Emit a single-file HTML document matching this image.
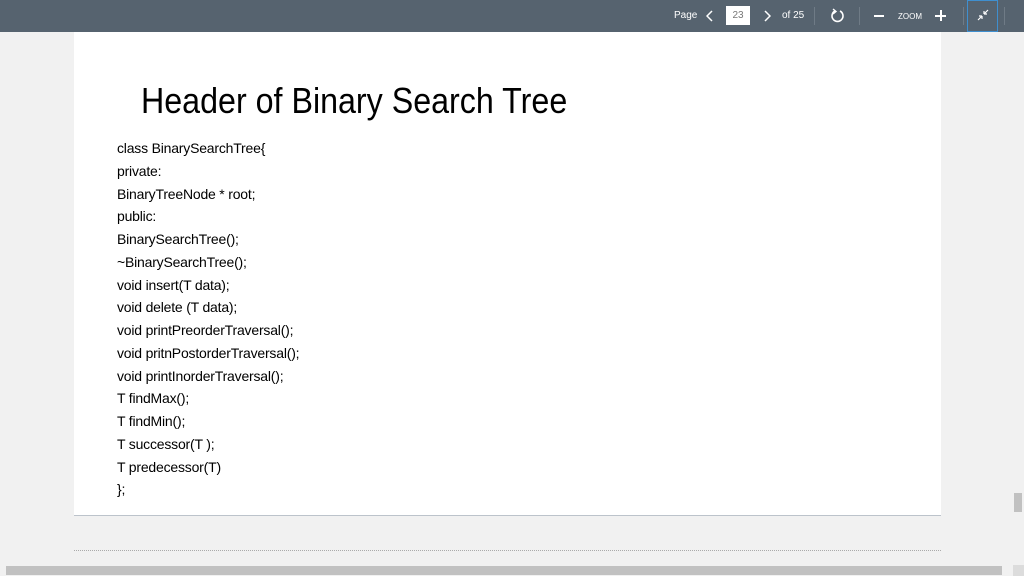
<!DOCTYPE html>
<html><head><meta charset="utf-8"><style>
*{margin:0;padding:0;box-sizing:border-box}
body{width:1024px;height:576px;overflow:hidden;background:#f1f1f1;font-family:"Liberation Sans",sans-serif;position:relative}
.bar{position:absolute;left:0;top:0;width:1024px;height:32px;background:#56636f;color:#fff}
.bar span{position:absolute;font-size:10px;top:10px}
.page{position:absolute;left:74px;top:32px;width:867px;height:484px;background:#fff;border-bottom:1px solid #bcc3cb}
h1{position:absolute;left:141px;top:80px;font-weight:normal;font-size:36px;color:#000;white-space:nowrap;transform:scaleX(0.895);transform-origin:left}
.code{position:absolute;left:117px;top:137px;font-size:14px;line-height:22.75px;color:#000;letter-spacing:-0.2px;white-space:pre}
.dots{position:absolute;left:74px;top:550px;width:867px;border-top:1px dotted #aaa}
</style></head><body>
<div class="bar">
<span style="left:674px">Page</span>
<svg style="position:absolute;left:706px;top:10px" width="8" height="12"><path d="M6 1L1 6L6 11" stroke="#fff" stroke-width="1.5" fill="none"/></svg>
<div style="position:absolute;left:726px;top:6px;width:24px;height:19px;background:#fff;color:#777;font-size:10px;text-align:center;line-height:19px">23</div>
<svg style="position:absolute;left:763px;top:10px" width="8" height="12"><path d="M2 1L7 6L2 11" stroke="#fff" stroke-width="1.5" fill="none"/></svg>
<span style="left:782px">of 25</span>
<div style="position:absolute;left:814px;top:7px;width:1px;height:18px;background:#6f7b86"></div>
<svg style="position:absolute;left:830px;top:8px" width="15" height="15"><path d="M5 3A5.5 5.5 0 1 0 10 3" stroke="#fff" stroke-width="1.6" fill="none"/><path d="M3 1L6 3.5L3 6" stroke="#fff" stroke-width="1.4" fill="none"/></svg>
<div style="position:absolute;left:859px;top:7px;width:1px;height:18px;background:#6f7b86"></div>
<div style="position:absolute;left:874px;top:15px;width:10px;height:1.5px;background:#fff"></div>
<span style="left:898px;font-size:8px;top:12px">ZOOM</span>
<div style="position:absolute;left:935px;top:15px;width:11px;height:1.5px;background:#fff"></div>
<div style="position:absolute;left:940px;top:10px;width:1.5px;height:11px;background:#fff"></div>
<div style="position:absolute;left:963px;top:7px;width:1px;height:18px;background:#6f7b86"></div>
<div style="position:absolute;left:967px;top:0;width:31px;height:32px;border:1px solid #3f8fcf"></div>
<svg style="position:absolute;left:977px;top:9px" width="12" height="12"><path d="M1 11L5 7M5 7H2M5 7V10M11 1L7 5M7 5H10M7 5V2" stroke="#fff" stroke-width="1.2" fill="none"/></svg>
<div style="position:absolute;left:1004px;top:7px;width:1px;height:18px;background:#6f7b86"></div>
</div>
<div class="page"></div>
<h1>Header of Binary Search Tree</h1>
<div class="code">class BinarySearchTree{
private:
BinaryTreeNode * root;
public:
BinarySearchTree();
~BinarySearchTree();
void insert(T data);
void delete (T data);
void printPreorderTraversal();
void pritnPostorderTraversal();
void printInorderTraversal();
T findMax();
T findMin();
T successor(T );
T predecessor(T)
};</div>
<div class="dots"></div>
<div style="position:absolute;left:1013px;top:32px;width:11px;height:533px;background:#f1f1f1"></div>
<div style="position:absolute;left:1014px;top:493px;width:8px;height:19px;background:#c1c1c1"></div>
<div style="position:absolute;left:0;top:565px;width:1013px;height:11px;background:#f1f1f1"></div>
<div style="position:absolute;left:6px;top:566px;width:996px;height:9px;background:#c1c1c1"></div>
<div style="position:absolute;left:1013px;top:565px;width:11px;height:11px;background:#dcdcdc"></div>
</body></html>
